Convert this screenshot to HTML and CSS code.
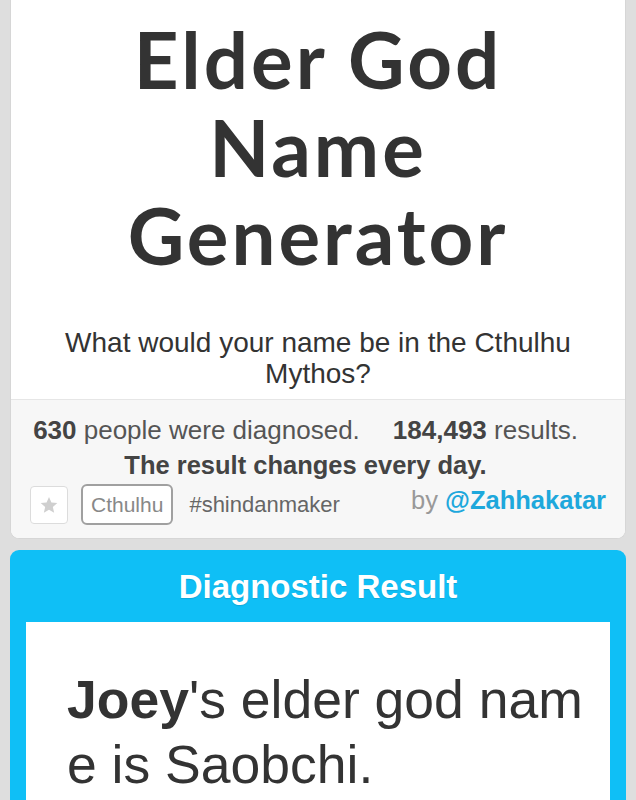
FILE: index.html
```html
<!DOCTYPE html>
<html lang="en">
<head>
<meta charset="utf-8">
<title>Elder God Name Generator</title>
<link rel="stylesheet" href="styles.css">
</head>
<body>
<main class="page">
  <section class="card">
    <div class="intro">
      <h1 class="title">Elder God<br>Name<br>Generator</h1>
      <p class="lead">What would your name be in the Cthulhu Mythos?</p>
    </div>
    <div class="meta">
      <p class="stats"><b>630</b> people were diagnosed.<span class="gap"></span><b>184,493</b> results.</p>
      <p class="daily">The result changes every day.</p>
      <div class="tools">
        <div class="tools-left">
          <button class="fav" type="button" aria-label="Favorite">
            <svg width="20" height="20" viewBox="0 0 24 24"><path d="M12 2.5l2.9 6.6 7.1.6-5.4 4.7 1.6 7-6.2-3.7-6.2 3.7 1.6-7L2 9.7l7.1-.6z" fill="#cfcfcf"/></svg>
          </button>
          <span class="tag">Cthulhu</span>
          <span class="hashtag">#shindanmaker</span>
        </div>
        <div class="author">by <a href="#">@Zahhakatar</a></div>
      </div>
    </div>
  </section>

  <section class="result">
    <h2 class="result-head">Diagnostic Result</h2>
    <div class="result-body">
      <p class="result-text"><b>Joey</b>'s elder god name is Saobchi.</p>
    </div>
  </section>
</main>
</body>
</html>
```

FILE: styles.css
```css
* { box-sizing: border-box; }

html, body {
  margin: 0;
  padding: 0;
}

body {
  background: #dedede;
  font-family: "Liberation Sans", Arial, sans-serif;
  color: #333;
}

.page {
  padding: 0 10px;
  display: flex;
  flex-direction: column;
  gap: 11px;
}

/* top card */
.card {
  background: #fff;
  border: 1px solid #d6d6d6;
  border-top: none;
  border-radius: 0 0 9px 9px;
  overflow: hidden;
}

.intro {
  padding: 15px 20px 10px;
  text-align: center;
}

.title {
  margin: 0;
  font-family: Lato, "Open Sans", sans-serif;
  font-weight: 700;
  font-size: 78px;
  line-height: 88px;
  letter-spacing: 3px;
  color: #333;
}

.lead {
  margin: 48px 0 0;
  font-size: 28px;
  line-height: 31px;
  color: #333;
}

.meta {
  background: #f7f7f7;
  border-top: 1px solid #e6e6e6;
  padding: 13px 19px 13px;
  text-align: center;
}

.stats, .daily {
  margin: 0;
  padding-right: 25px;
  font-size: 26px;
  line-height: 35px;
  color: #555;
}

.stats b { color: #444; }

.gap {
  display: inline-block;
  width: 33px;
}

.daily {
  font-size: 25.5px;
  font-weight: 700;
  color: #444;
}

.tools {
  display: flex;
  justify-content: space-between;
  align-items: center;
  margin-top: 1px;
}

.tools-left {
  display: flex;
  align-items: center;
  gap: 13px;
}

.fav {
  width: 38px;
  height: 38px;
  padding: 0;
  display: flex;
  align-items: center;
  justify-content: center;
  background: #fff;
  border: 1px solid #dcdcdc;
  border-radius: 4px;
}

.tag {
  display: inline-block;
  height: 41px;
  padding: 0 8px;
  border: 2px solid #a0a0a0;
  border-radius: 6px;
  background: #fff;
  font-size: 21px;
  line-height: 37px;
  color: #888;
}

.hashtag {
  margin-left: 3px;
  font-size: 22px;
  color: #666;
}

.author {
  margin-top: -8px;
  font-size: 25.5px;
  color: #999;
}

.author a {
  color: #1ea8dc;
  font-weight: 700;
  text-decoration: none;
}

/* result panel */
.result {
  background: #0fbff6;
  border-radius: 9px 9px 0 0;
  padding: 0 16px;
}

.result-head {
  margin: 0;
  padding-top: 2px;
  font-size: 33px;
  line-height: 70px;
  font-weight: 700;
  text-align: center;
  color: #fff;
  text-shadow: 0 1px 1px rgba(0, 0, 0, 0.12);
}

.result-body {
  background: #fff;
  padding: 45px 20px 40px 41px;
}

.result-text {
  margin: 0;
  font-size: 53.5px;
  line-height: 65px;
  color: #333;
  word-break: break-all;
}

.result-text b { color: #333; }
```
